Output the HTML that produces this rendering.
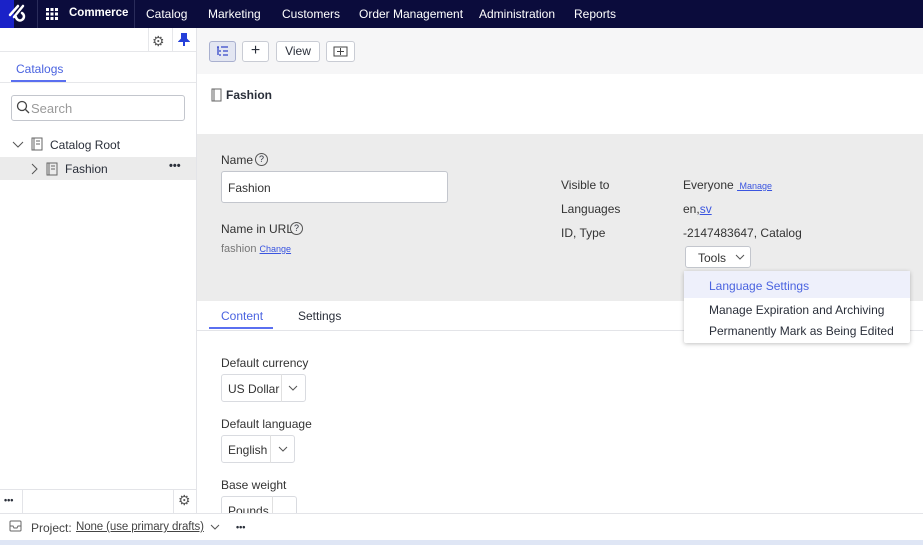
<!DOCTYPE html>
<html><head><style>
*{box-sizing:border-box;margin:0;padding:0}
body{width:923px;height:545px;overflow:hidden;font-family:"Liberation Sans",sans-serif;font-size:12px;color:#2a2f3a;background:#fff;position:relative}
.abs{position:absolute}
.top{left:0;top:0;width:923px;height:28px;background:#0b0c3c;color:#fff}
.top span{position:absolute;top:7px;font-size:12px}
.btn{position:absolute;border:1px solid #c9ccd4;border-radius:3px;background:#fff;height:21px;top:41px}
.inp{position:absolute;border:1px solid #c3c6cd;border-radius:3px;background:#fff}
.lbl{position:absolute;font-size:12px;color:#333}
.sel{position:absolute;border:1px solid #d9dbe0;border-radius:3px;height:28px;background:#fff}
.q{position:absolute;width:13px;height:13px;border:1.3px solid #555;border-radius:50%;font-size:9px;text-align:center;line-height:11px}
</style></head><body>
<div class="abs top">
 <div class="abs" style="left:0;top:0;width:14px;height:28px;background:#1a22c8"></div>
 <svg class="abs" style="left:6px;top:3px" width="24" height="22" viewBox="0 0 24 22"><path d="M12 3 L4 12 M17 3 L8 14 M10 14 a4 4 0 1 0 6 -4" stroke="#fff" stroke-width="2.5" fill="none" stroke-linecap="round"/></svg>
 <div class="abs" style="left:37px;top:0;width:1px;height:28px;background:#2a2c5a"></div>
 <svg class="abs" style="left:46px;top:8px" width="12" height="12"><g fill="#fff"><rect x="0" y="0" width="3" height="3"/><rect x="4.5" y="0" width="3" height="3"/><rect x="9" y="0" width="3" height="3"/><rect x="0" y="4.5" width="3" height="3"/><rect x="4.5" y="4.5" width="3" height="3"/><rect x="9" y="4.5" width="3" height="3"/><rect x="0" y="9" width="3" height="3"/><rect x="4.5" y="9" width="3" height="3"/><rect x="9" y="9" width="3" height="3"/></g></svg>
 <span style="left:69px;font-weight:bold;font-size:11.5px">Commerce</span>
 <div class="abs" style="left:134px;top:0;width:1px;height:28px;background:#2a2c5a"></div>
 <span style="left:146px">Catalog</span><span style="left:208px">Marketing</span><span style="left:282px">Customers</span><span style="left:359px">Order Management</span><span style="left:479px">Administration</span><span style="left:574px">Reports</span>
</div>
<div class="abs" style="left:196px;top:28px;width:1px;height:485px;background:#e3e4e8"></div>
<div class="abs" style="left:0;top:51px;width:196px;height:1px;background:#e6e7ea"></div>
<div class="abs" style="left:148px;top:28px;width:1px;height:23px;background:#e6e7ea"></div>
<div class="abs" style="left:172px;top:28px;width:1px;height:23px;background:#e6e7ea"></div>
<div class="abs" style="left:152px;top:33px;font-size:14px;color:#555">⚙</div>
<svg class="abs" style="left:178px;top:33px" width="12" height="13"><path d="M3 1h6M4 1v5l-2 2h8l-2-2V1M6 8v5" stroke="#2540d9" stroke-width="2" fill="#2540d9"/></svg>
<div class="abs" style="left:16px;top:62px;color:#4a63e0">Catalogs</div>
<div class="abs" style="left:11px;top:80px;width:55px;height:2px;background:#5a6ff0"></div>
<div class="abs" style="left:0;top:82px;width:196px;height:1px;background:#e6e7ea"></div>
<div class="inp" style="left:11px;top:95px;width:174px;height:26px"></div>
<svg class="abs" style="left:16px;top:100px" width="14" height="14"><circle cx="6" cy="6" r="4.5" stroke="#444" stroke-width="1.3" fill="none"/><path d="M9.5 9.5 L13 13" stroke="#444" stroke-width="1.3"/></svg>
<div class="abs" style="left:31px;top:101px;color:#999;font-size:13px">Search</div>
<svg class="abs" style="left:12px;top:140px" width="12" height="10"><path d="M1 2 L6 7 L11 2" stroke="#555" fill="none"/></svg>
<svg class="abs" style="left:31px;top:137px" width="12" height="14"><rect x="1" y="1" width="10" height="12" stroke="#666" fill="none"/><path d="M3 1v12M5 4h4M5 7h4" stroke="#666"/></svg>
<div class="abs" style="left:50px;top:138px">Catalog Root</div>
<div class="abs" style="left:0;top:157px;width:196px;height:23px;background:#ebebeb"></div>
<svg class="abs" style="left:30px;top:163px" width="8" height="12"><path d="M2 1 L7 6 L2 11" stroke="#555" fill="none"/></svg>
<svg class="abs" style="left:46px;top:162px" width="12" height="14"><rect x="1" y="1" width="10" height="12" stroke="#666" fill="none"/><path d="M3 1v12M5 4h4M5 7h4" stroke="#666"/></svg>
<div class="abs" style="left:65px;top:162px">Fashion</div>
<div class="abs" style="left:169px;top:160px;font-weight:bold;font-size:11px">•••</div>
<div class="abs" style="left:0;top:489px;width:196px;height:1px;background:#e3e4e8"></div>
<div class="abs" style="left:22px;top:489px;width:1px;height:24px;background:#e3e4e8"></div>
<div class="abs" style="left:173px;top:489px;width:1px;height:24px;background:#e3e4e8"></div>
<div class="abs" style="left:4px;top:495px;font-size:9px;font-weight:bold">•••</div>
<div class="abs" style="left:178px;top:492px;font-size:14px;color:#555">⚙</div>
<div class="abs" style="left:197px;top:28px;width:726px;height:46px;background:#f6f6f7"></div>
<div class="btn" style="left:209px;width:27px;background:#e3e6f2;border-color:#a9b0cf"><svg width="25" height="19"><path d="M7 5h2M11 5h7M9 9h2M13 9h5M9 13h2M13 13h5M8 5v8" stroke="#3446c8" stroke-width="1.3"/></svg></div>
<div class="btn" style="left:242px;width:27px;text-align:center;font-size:16px;line-height:18px">+</div>
<div class="btn" style="left:276px;width:44px;text-align:center;line-height:19px">View</div>
<div class="btn" style="left:326px;width:29px"><svg width="27" height="19"><rect x="7" y="5" width="13" height="9" stroke="#444" fill="none"/><path d="M10 9.5h7M13.5 6v7" stroke="#444"/></svg></div>
<svg class="abs" style="left:211px;top:88px" width="11" height="14"><rect x="1" y="1" width="9" height="12" stroke="#666" fill="none"/><path d="M3 1v12" stroke="#666"/></svg>
<div class="abs" style="left:226px;top:88px;font-weight:bold">Fashion</div>
<div class="abs" style="left:197px;top:134px;width:726px;height:167px;background:#ececec"></div>
<div class="lbl" style="left:221px;top:153px">Name</div>
<div class="q" style="left:255px;top:153px">?</div>
<div class="inp" style="left:221px;top:171px;width:227px;height:32px"></div>
<div class="lbl" style="left:228px;top:181px">Fashion</div>
<div class="lbl" style="left:221px;top:222px">Name in URL</div>
<div class="q" style="left:290px;top:222px">?</div>
<div class="lbl" style="left:221px;top:243px;color:#777;font-size:11px">fashion <span style="color:#3a55e0;text-decoration:underline;font-size:9px">Change</span></div>
<div class="lbl" style="left:561px;top:178px">Visible to</div>
<div class="lbl" style="left:683px;top:178px">Everyone <span style="color:#3a55e0;text-decoration:underline;font-size:9px">&nbsp;Manage</span></div>
<div class="lbl" style="left:561px;top:202px">Languages</div>
<div class="lbl" style="left:683px;top:202px">en,<span style="color:#3a55e0;text-decoration:underline">sv</span></div>
<div class="lbl" style="left:561px;top:226px">ID, Type</div>
<div class="lbl" style="left:683px;top:226px">-2147483647, Catalog</div>
<div class="inp" style="left:685px;top:246px;width:66px;height:22px"></div>
<div class="lbl" style="left:698px;top:251px">Tools</div>
<svg class="abs" style="left:735px;top:254px" width="10" height="7"><path d="M1 1l4 4 4-4" stroke="#555" fill="none"/></svg>
<div class="abs" style="left:197px;top:330px;width:726px;height:1px;background:#e3e4e8"></div>
<div class="abs" style="left:221px;top:309px;color:#4a63e0">Content</div>
<div class="abs" style="left:209px;top:327px;width:64px;height:2px;background:#5a6ff0"></div>
<div class="abs" style="left:298px;top:309px">Settings</div>
<div class="abs" style="left:684px;top:271px;width:226px;height:72px;background:#fff;box-shadow:0 1px 4px rgba(0,0,0,.25);border-radius:2px">
 <div style="height:27px;background:#eef0fb;color:#4a63e0;padding:8px 0 0 25px">Language Settings</div>
 <div style="padding:5px 0 0 25px">Manage Expiration and Archiving</div>
 <div style="padding:7px 0 0 25px">Permanently Mark as Being Edited</div>
</div>
<div class="lbl" style="left:221px;top:356px">Default currency</div>
<div class="sel" style="left:221px;top:374px;width:85px"></div><div class="abs" style="left:281px;top:374px;width:1px;height:28px;background:#e0e0e0"></div>
<div class="lbl" style="left:228px;top:382px">US Dollar</div>
<svg class="abs" style="left:288px;top:385px" width="10" height="7"><path d="M1 1l4 4 4-4" stroke="#555" fill="none"/></svg>
<div class="lbl" style="left:221px;top:417px">Default language</div>
<div class="sel" style="left:221px;top:435px;width:74px"></div><div class="abs" style="left:270px;top:435px;width:1px;height:28px;background:#e0e0e0"></div>
<div class="lbl" style="left:228px;top:443px">English</div>
<svg class="abs" style="left:278px;top:446px" width="10" height="7"><path d="M1 1l4 4 4-4" stroke="#555" fill="none"/></svg>
<div class="lbl" style="left:221px;top:478px">Base weight</div>
<div class="sel" style="left:221px;top:496px;width:76px"></div><div class="abs" style="left:272px;top:496px;width:1px;height:17px;background:#e0e0e0"></div>
<div class="lbl" style="left:228px;top:504px">Pounds</div>
<div class="abs" style="left:0;top:513px;width:923px;height:27px;background:#fff;border-top:1px solid #e3e4e8"></div>
<svg class="abs" style="left:9px;top:520px" width="13" height="12"><rect x="1" y="1" width="11" height="10" rx="1" stroke="#666" fill="none"/><path d="M1 6h3l1 2h3l1-2h3" stroke="#666" fill="none"/></svg>
<div class="abs" style="left:31px;top:521px;color:#444">Project:</div>
<div class="abs" style="left:76px;top:521px;color:#444;text-decoration:underline;font-size:11.5px;letter-spacing:-0.1px">None (use primary drafts)</div>
<svg class="abs" style="left:210px;top:524px" width="10" height="7"><path d="M1 1l4 4 4-4" stroke="#555" fill="none"/></svg>
<div class="abs" style="left:236px;top:522px;font-size:9px;font-weight:bold">•••</div>
<div class="abs" style="left:0;top:540px;width:923px;height:5px;background:#dfe6f5"></div>
</body></html>
